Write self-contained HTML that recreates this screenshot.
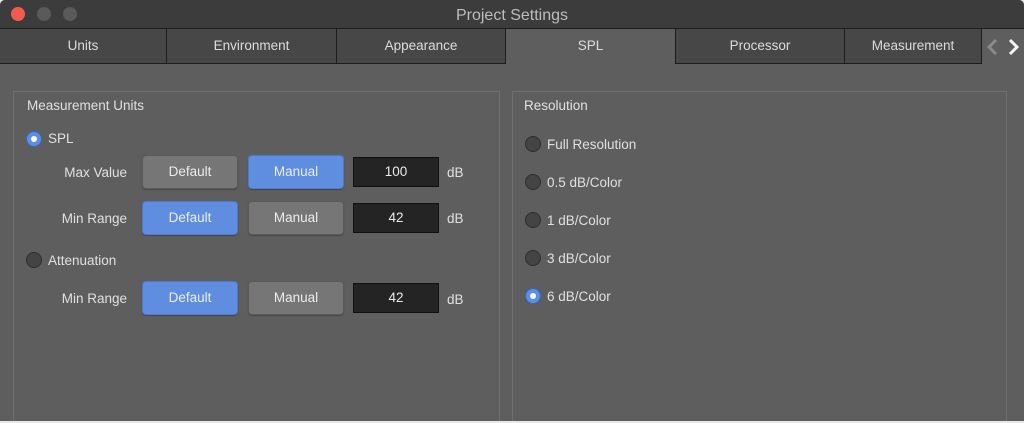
<!DOCTYPE html>
<html><head><style>
*{box-sizing:border-box;margin:0;padding:0}
body{width:1024px;height:423px;overflow:hidden;background:#e8e8e8;font-family:"Liberation Sans",sans-serif;position:relative}
.win{position:absolute;left:0;top:0;width:1024px;height:421px;background:#5e5e5e;overflow:hidden;border-radius:5px 5px 0 0}
.title{position:absolute;left:0;top:0;width:1024px;height:29px;background:#3c3c3c;border-bottom:1px solid #1e1e1e;color:#bdbdbd;font-size:16px;text-align:center;line-height:31px}
.dot{position:absolute;top:7px;width:14px;height:14px;border-radius:50%;background:#5a5a5a}
.tab{position:absolute;top:29px;height:35px;background:#474747;border:1px solid #1c1c1c;border-top:none;color:#dcdcdc;font-size:13.5px;text-align:center;line-height:34px}
.tab.sel{background:#5e5e5e;border-bottom:none;height:36px}
.grp{position:absolute;top:91px;height:340px;border:1px solid #6f6f6f;border-bottom:none}
.t{position:absolute;color:#e0e0e0;font-size:13.5px;white-space:nowrap}
.btn{position:absolute;width:96px;height:34px;border-radius:4px;background:#767676;border:1px solid #5a5a5a;color:#ececec;font-size:13.5px;text-align:center;line-height:32px;box-shadow:0 1px 1px rgba(0,0,0,.25)}
.btn.b{background:#5f8ee0;border-color:#4f7ac8}
.fld{position:absolute;width:86px;height:30px;background:#242424;border:1px solid #111;color:#ececec;font-size:13.5px;text-align:center;line-height:28px}
.rad{position:absolute;width:16px;height:16px;border-radius:50%;background:#444;border:1px solid #2e2e2e}
.rad.on{background:#5a8ee8;border-color:#3b66b0}
.rad.on:after{content:"";position:absolute;left:4px;top:4px;width:6px;height:6px;border-radius:50%;background:#fff}
.lbl{position:absolute;width:110px;text-align:right;color:#e0e0e0;font-size:13.5px}
</style></head><body>
<div class="win">
<div class="title">Project Settings</div>
<div class="dot" style="left:11px;background:#f25a50"></div>
<div class="dot" style="left:37px"></div>
<div class="dot" style="left:63px"></div>
<div class="tab" style="left:-1px;width:168px">Units</div>
<div class="tab" style="left:167px;width:170px;border-left:none">Environment</div>
<div class="tab" style="left:337px;width:169px;border-left:none">Appearance</div>
<div class="tab sel" style="left:506px;width:169px;border-left:none;border-right:none">SPL</div>
<div class="tab" style="left:675px;width:170px">Processor</div>
<div class="tab" style="left:845px;width:137px;border-left:none">Measurement</div>
<svg style="position:absolute;left:984px;top:36px" width="40" height="22"><path d="M12 4 L5 11 L12 18" fill="none" stroke="#8a8a8a" stroke-width="3"/><path d="M26 4 L33 11 L26 18" fill="none" stroke="#f4f4f4" stroke-width="3"/></svg>
<div class="grp" style="left:13px;width:487px"></div>
<div class="grp" style="left:512px;width:495px"></div>
<div class="t" style="left:27px;top:98px">Measurement Units</div>
<div class="t" style="left:524px;top:98px">Resolution</div>
<div class="rad on" style="left:26px;top:131px"></div><div class="t" style="left:48px;top:131px">SPL</div>
<div class="lbl" style="left:17px;top:165px">Max Value</div>
<div class="btn" style="left:142px;top:155px">Default</div>
<div class="btn b" style="left:248px;top:155px">Manual</div>
<div class="fld" style="left:353px;top:157px">100</div>
<div class="t" style="left:447px;top:165px">dB</div>
<div class="lbl" style="left:17px;top:211px">Min Range</div>
<div class="btn b" style="left:142px;top:201px">Default</div>
<div class="btn" style="left:248px;top:201px">Manual</div>
<div class="fld" style="left:353px;top:203px">42</div>
<div class="t" style="left:447px;top:211px">dB</div>
<div class="rad" style="left:26px;top:252px"></div><div class="t" style="left:48px;top:253px">Attenuation</div>
<div class="lbl" style="left:17px;top:291px">Min Range</div>
<div class="btn b" style="left:142px;top:281px">Default</div>
<div class="btn" style="left:248px;top:281px">Manual</div>
<div class="fld" style="left:353px;top:283px">42</div>
<div class="t" style="left:447px;top:292px">dB</div>
<div class="rad" style="left:525px;top:136px"></div><div class="t" style="left:547px;top:137px">Full Resolution</div>
<div class="rad" style="left:525px;top:174px"></div><div class="t" style="left:547px;top:175px">0.5 dB/Color</div>
<div class="rad" style="left:525px;top:212px"></div><div class="t" style="left:547px;top:213px">1 dB/Color</div>
<div class="rad" style="left:525px;top:250px"></div><div class="t" style="left:547px;top:251px">3 dB/Color</div>
<div class="rad on" style="left:525px;top:288px"></div><div class="t" style="left:547px;top:289px">6 dB/Color</div>
</div>
</body></html>
